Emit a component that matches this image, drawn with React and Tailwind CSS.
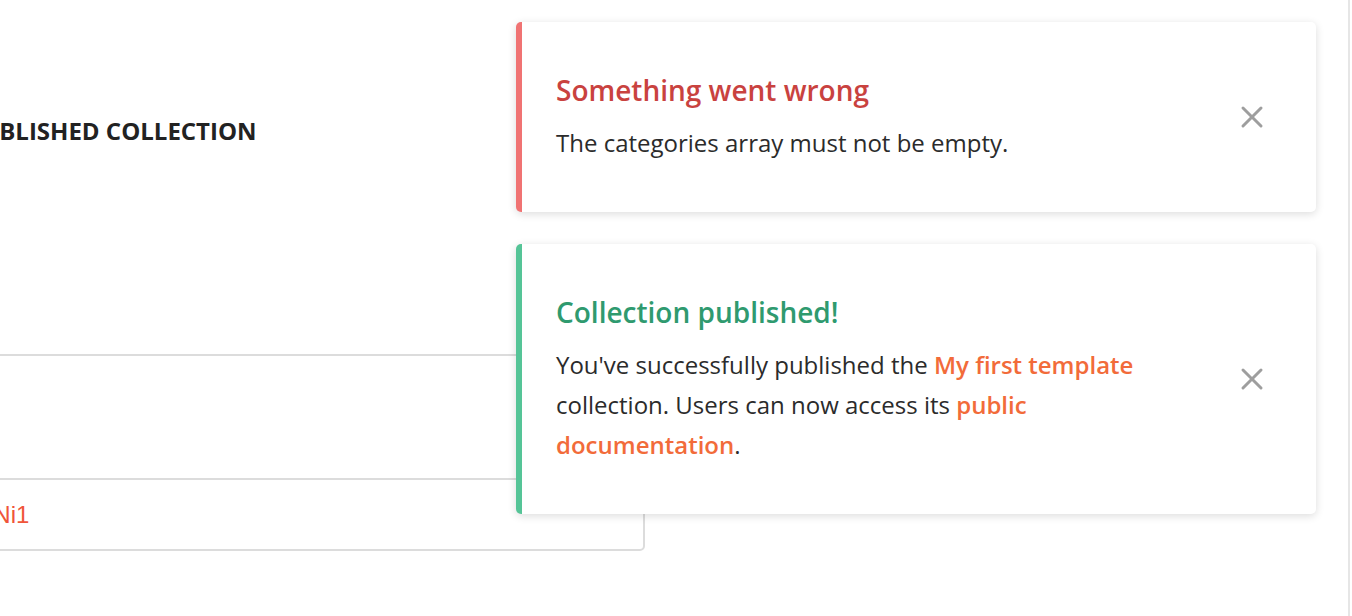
import React from "react";

const font = { fontFamily: '"Open Sans", "Liberation Sans", sans-serif' };

function CloseIcon() {
  return (
    <svg width="24" height="24" viewBox="0 0 24 24" fill="none" stroke="#9e9e9e" strokeWidth="3" strokeLinecap="round">
      <path d="M3 3L21 21" />
      <path d="M21 3L3 21" />
    </svg>
  );
}

function Toast({ accent, titleColor, title, children }) {
  return (
    <div className={`flex items-center justify-between rounded-[5px] border-l-[6px] bg-white shadow-[0_2px_8px_rgba(0,0,0,0.14)] ${accent}`}>
      <div className="w-[640px] shrink-0 pl-[34px] pt-[50px] pb-[49px]">
        <h3 className={`h-[36px] text-[28px] font-semibold leading-[36px] ${titleColor}`}>{title}</h3>
        <p className="mt-[15px] text-[24px] leading-[40px] text-[#2b2b2b]">{children}</p>
      </div>
      <button className="mr-[52px] flex h-[24px] w-[24px] items-center justify-center">
        <CloseIcon />
      </button>
    </div>
  );
}

export default function App() {
  return (
    <div className="relative flex h-[616px] w-[1352px] overflow-hidden bg-white" style={font}>
      <main className="flex-1">
        <div className="-ml-[60px] w-[705px]">
          <h2 className="pl-[26px] pt-[115px] text-[24px] font-bold uppercase leading-[32px] text-[#222]">
            Published collection
          </h2>
          <div className="mt-[207px] rounded-[5px] border-2 border-[#dcdcdc]">
            <div className="h-[122px]" />
            <div className="flex h-[71px] items-center border-t-2 border-[#dcdcdc] pl-[38px]">
              <span className="text-[24px] text-[#f0553a]" style={{ fontFamily: '"Liberation Sans", Arial, sans-serif' }}>
                4Ni1
              </span>
            </div>
          </div>
        </div>
      </main>
      <div className="w-[4px] border-l-2 border-[#e6e6e6]" />

      <div className="absolute left-[516px] top-[22px] flex w-[800px] flex-col gap-[32px]">
        <Toast accent="border-[#f07373]" titleColor="text-[#c9423f]" title="Something went wrong">
          The categories array must not be empty.
        </Toast>
        <Toast accent="border-[#55c497]" titleColor="text-[#2f9a6f]" title="Collection published!">
          You've successfully published the{" "}
          <a className="font-semibold text-[#f26b3a]">My first template</a> collection. Users can now
          access its <a className="font-semibold text-[#f26b3a]">public documentation</a>.
        </Toast>
      </div>
    </div>
  );
}
